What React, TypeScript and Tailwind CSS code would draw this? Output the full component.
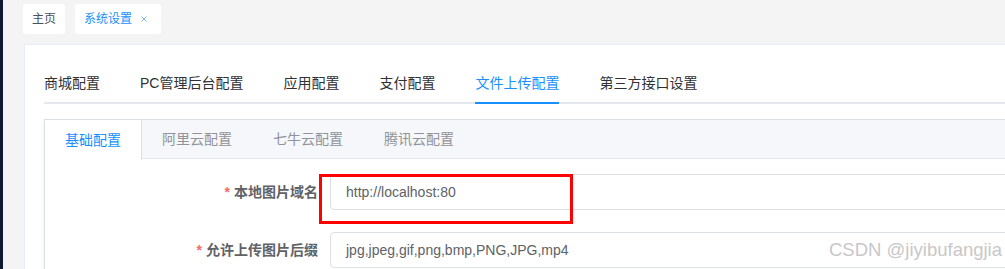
import React from "react";

const font = { fontFamily: '"Liberation Sans", "Noto Sans CJK SC", sans-serif' };

const mainTabs = ["商城配置", "PC管理后台配置", "应用配置", "支付配置", "文件上传配置", "第三方接口设置"];
const subTabs = ["基础配置", "阿里云配置", "七牛云配置", "腾讯云配置"];

export default function App() {
  return (
    <div
      className="relative flex w-[1005px] h-[269px] overflow-hidden bg-[#f4f4f5]"
      style={font}
    >
      <div className="w-[3px] shrink-0 bg-[#0c1b30]" />

      <div className="flex-1 min-w-0 pl-[20px]">
        {/* tag bar */}
        <div className="flex gap-[10px] h-[44px] pt-[4px]">
          <div className="h-[30px] px-[9px] flex items-center bg-white rounded-[3px] text-[12px] text-[#495060]">
            主页
          </div>
          <div className="h-[30px] pl-[9px] pr-[14px] flex items-center bg-white rounded-[3px] text-[12px] text-[#1890ff]">
            系统设置
            <svg className="ml-[9px]" width="6" height="6" viewBox="0 0 6 6">
              <path d="M0.5 0.5 L5.5 5.5 M5.5 0.5 L0.5 5.5" stroke="#7fb8f5" strokeWidth="1" />
            </svg>
          </div>
        </div>

        {/* card */}
        <div className="ml-[1px] w-[1100px] h-[300px] bg-white border-l border-t border-[#e6ebf5] pl-[19px] pt-[19px]">
          {/* main tabs */}
          <div className="flex h-[40px] border-b-2 border-[#e4e7ed] text-[14px] text-[#303133]">
            {mainTabs.map((t, i) => {
              const active = i === 4;
              return (
                <div key={t} className={`h-[40px] -mb-[2px] ${i === 0 ? "pr-[20px]" : "px-[20px]"}`}>
                  <div
                    className={`h-full flex items-center border-b-2 ${
                      active ? "border-[#1890ff] text-[#1890ff]" : "border-transparent"
                    }`}
                  >
                    {t}
                  </div>
                </div>
              );
            })}
          </div>

          {/* inner border card tabs */}
          <div className="mt-[15px] border border-[#dcdfe6] bg-white shadow-[0_2px_4px_0_rgba(0,0,0,0.08)]">
            <div className="flex h-[39px] bg-[#f5f7fa] border-b border-[#e4e7ed] text-[14px]">
              {subTabs.map((t, i) => {
                const active = i === 0;
                return (
                  <div
                    key={t}
                    className={`h-[39px] px-[20px] flex items-center border-r ${
                      active
                        ? "bg-white border-[#dcdfe6] text-[#1890ff] h-[40px] -mb-px"
                        : "border-transparent text-[#909399]"
                    }`}
                  >
                    {t}
                  </div>
                );
              })}
            </div>

            <div className="p-[15px]">
              <FormRow label="本地图片域名" value="http://localhost:80" marked />
              <FormRow label="允许上传图片后缀" value="jpg,jpeg,gif,png,bmp,PNG,JPG,mp4" />
            </div>
          </div>
        </div>
      </div>

      <div
        className="absolute left-[829px] top-[240px] leading-[20px] text-[18.5px] text-[#c8c8c8] whitespace-nowrap [text-shadow:0_0_1px_#fff]"
        style={{ fontFamily: '"Liberation Sans", Arial, sans-serif' }}
      >
        CSDN @jiyibufangjia
      </div>
    </div>
  );
}

function FormRow({ label, value, marked }: { label: string; value: string; marked?: boolean }) {
  return (
    <div className="flex mb-[22px]">
      <div className="w-[270px] shrink-0 pr-[12px] text-right leading-[36px] text-[14px] font-bold text-[#606266]">
        <span className="text-[#f56c6c] mr-[4px]">*</span>
        {label}
      </div>
      <div className="relative flex-1">
        <div className="h-[36px] border border-[#dcdfe6] rounded-[4px] px-[15px] flex items-center text-[14px] text-[#606266]">
          {value}
        </div>
        {marked && (
          <div className="absolute -left-[11px] top-0 w-[254px] h-[50px] border-[3px] border-[#ff0000]" />
        )}
      </div>
    </div>
  );
}
